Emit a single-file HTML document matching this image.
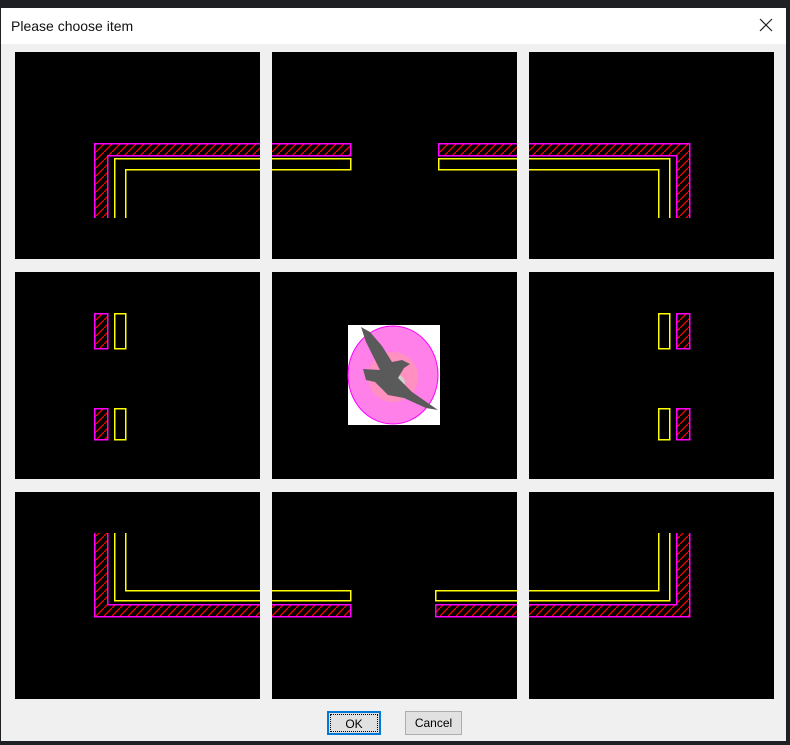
<!DOCTYPE html>
<html><head><style>
body{margin:0;width:790px;height:745px;background:#1f2023;position:relative;overflow:hidden;font-family:"Liberation Sans",sans-serif}
.win{position:absolute;left:1px;top:8px;width:785px;height:733px;background:#f0f0f0}
.title{position:absolute;left:0;top:0;width:785px;height:36px;background:#fff}
.title span{position:absolute;left:10px;top:10px;font-size:14px;color:#111}
.btn{position:absolute;top:711px;height:24px;font-size:12px;text-align:center;line-height:22px;box-sizing:border-box;background:#e1e1e1;border:1px solid #adadad}
</style></head><body>
<div class="win">
<div class="title"><span>Please choose item</span>
<svg style="position:absolute;left:758px;top:10px" width="14" height="14"><path d="M1 1L13 13M13 1L1 13" stroke="#222" stroke-width="1.2"/></svg></div>
</div>
<svg style="position:absolute;left:0;top:0" width="790" height="745">
<defs><pattern id="h" width="8" height="8" patternUnits="userSpaceOnUse"><path d="M0 8L8 0" stroke="#f00" stroke-width="1.3"/></pattern></defs>
<rect x="15" y="52" width="759" height="647" fill="#000"/>
<g stroke="#f0f" stroke-width="1.5" shape-rendering="crispEdges">
<path d="M94.5 218V143.5H350.5V155.5H107.5V218" fill="url(#h)"/>
<path d="M689.5 218V143.5H438.5V155.5H676.5V218" fill="url(#h)"/>
<rect x="94.5" y="313.5" width="13" height="35" fill="url(#h)"/>
<rect x="94.5" y="408.5" width="13" height="31" fill="url(#h)"/>
<rect x="676.5" y="313.5" width="13" height="35" fill="url(#h)"/>
<rect x="676.5" y="408.5" width="13" height="31" fill="url(#h)"/>
<path d="M94.5 533V616.5H350.5V604.5H107.5V533" fill="url(#h)"/>
<path d="M689.5 533V616.5H435.5V604.5H676.5V533" fill="url(#h)"/>
</g>
<g stroke="#ff0" stroke-width="1.5" fill="none" shape-rendering="crispEdges">
<path d="M114.5 218V158.5H350.5V169.5H125.5V218"/>
<path d="M669.5 218V158.5H438.5V169.5H658.5V218"/>
<rect x="114.5" y="313.5" width="11" height="35"/><rect x="114.5" y="408.5" width="11" height="31"/>
<rect x="658.5" y="313.5" width="11" height="35"/><rect x="658.5" y="408.5" width="11" height="31"/>
<path d="M114.5 533V600.5H350.5V590.5H125.5V533"/>
<path d="M669.5 533V600.5H435.5V590.5H658.5V533"/>
</g>
<g fill="#f0f0f0">
<rect x="260" y="52" width="12" height="647"/><rect x="517" y="52" width="12" height="647"/>
<rect x="15" y="259" width="759" height="13"/><rect x="15" y="479" width="759" height="13"/>
</g>
<rect x="348" y="325" width="92" height="100" fill="#fff"/>
<ellipse cx="393" cy="375" rx="45" ry="49" fill="#ff80e8" stroke="#f0f" stroke-width="1"/>
<circle cx="393" cy="377" r="25" fill="#ff90c0"/>
<ellipse cx="392" cy="383" rx="13" ry="10" fill="#d0d0d0"/>
<path d="M361 327L370 332L382 346L392 362L402 360L410 364L404 368L398 378L412 392L438 410L426 408L404 398L388 395L375 382L366 380L363 369L380 370L375 360L366 342Z" fill="#5a5a5a"/>
</svg>
<div class="btn" style="left:327px;width:54px;border:2px solid #0078d7;outline:1px dotted #000;outline-offset:-4px">OK</div>
<div class="btn" style="left:405px;width:57px">Cancel</div>
</body></html>
